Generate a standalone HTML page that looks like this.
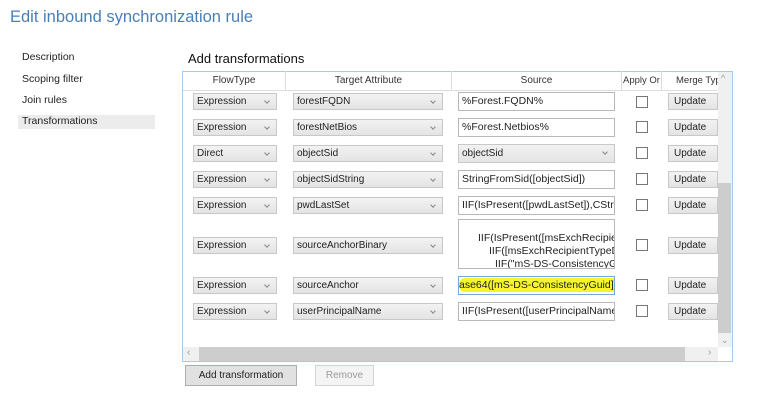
<!DOCTYPE html>
<html><head><style>
*{margin:0;padding:0;box-sizing:border-box}
body{width:768px;height:417px;background:#fff;font-family:"Segoe UI","Liberation Sans",sans-serif;position:relative;overflow:hidden;color:#222}
.a{position:absolute;white-space:nowrap}
.dd{position:absolute;height:17px;background:linear-gradient(#f2f2f2,#e4e4e4);border:1px solid #c8c8c8;font-size:10px;line-height:16px;padding-left:3px;color:#222;white-space:nowrap}
.dd:after{content:"";position:absolute;right:7px;top:5px;width:3px;height:3px;border-right:1px solid #888;border-bottom:1px solid #888;transform:rotate(45deg)}
.tb{position:absolute;height:19px;background:#fff;border:1px solid #b8b8b8;font-size:10.5px;line-height:17px;padding-left:3px;overflow:hidden;color:#222;white-space:nowrap}
.cb{position:absolute;width:12px;height:12px;border:1px solid #777;background:#fff}
.up{position:absolute;width:50px;height:17px;background:linear-gradient(#f2f2f2,#e4e4e4);border:1px solid #c8c8c8;font-size:10px;line-height:16px;padding-left:5px}
.h{position:absolute;top:71px;height:19px;font-size:10px;line-height:19px;text-align:center;border-right:1px solid #ddd;color:#333;white-space:nowrap;overflow:hidden}
</style></head><body>
<div class="a" style="left:10px;top:8px;font-size:16.5px;color:#4a7fb5">Edit inbound synchronization rule</div>
<div class="a" style="left:22px;top:51px;font-size:10.5px">Description</div>
<div class="a" style="left:22px;top:73px;font-size:10.5px">Scoping filter</div>
<div class="a" style="left:22px;top:94px;font-size:10.5px">Join rules</div>
<div class="a" style="left:18px;top:115px;width:137px;height:14px;background:#ececec"></div>
<div class="a" style="left:22px;top:115px;font-size:10.5px">Transformations</div>
<div class="a" style="left:188px;top:51px;font-size:13px;color:#111">Add transformations</div>
<div class="a" style="left:182px;top:71px;width:551px;height:291px;border:1px solid #a9c9e6;background:#fff"></div>
<div class="a" style="left:183px;top:90px;width:534px;height:1px;background:#ddd"></div>
<div class="h" style="left:183px;width:103px">FlowType</div>
<div class="h" style="left:286px;width:166px">Target Attribute</div>
<div class="h" style="left:452px;width:170px">Source</div>
<div class="h" style="left:622px;width:40px;font-size:9.5px">Apply Or</div>
<div class="h" style="left:662px;width:56px;border:none;text-align:left;padding-left:14px;font-size:9.5px">Merge Typ</div>
<div class="a" style="left:718px;top:72px;width:14px;height:275px;background:#f0f0f0"></div>
<div class="a" style="left:718px;top:183px;width:13px;height:150px;background:#cdcdcd"></div>
<div class="a" style="left:721px;top:73px;font-size:9px;color:#999">^</div>
<div class="a" style="left:721px;top:335px;font-size:9px;color:#999">&#8964;</div>
<div class="a" style="left:183px;top:347px;width:535px;height:14px;background:#f0f0f0"></div>
<div class="a" style="left:199px;top:347px;width:486px;height:14px;background:#cdcdcd"></div>
<div class="a" style="left:187px;top:347px;font-size:10px;color:#999">&lsaquo;</div>
<div class="a" style="left:708px;top:347px;font-size:10px;color:#999">&rsaquo;</div>

<div class="dd" style="left:193px;top:93px;width:84px">Expression</div>
<div class="dd" style="left:293px;top:93px;width:150px">forestFQDN</div>
<div class="tb" style="left:458px;top:92px;width:157px">%Forest.FQDN%</div>
<div class="cb" style="left:636px;top:96px"></div><div class="up" style="left:668px;top:93px">Update</div>

<div class="dd" style="left:193px;top:119px;width:84px">Expression</div>
<div class="dd" style="left:293px;top:119px;width:150px">forestNetBios</div>
<div class="tb" style="left:458px;top:118px;width:157px">%Forest.Netbios%</div>
<div class="cb" style="left:636px;top:121px"></div><div class="up" style="left:668px;top:119px">Update</div>

<div class="dd" style="left:193px;top:145px;width:84px">Direct</div>
<div class="dd" style="left:293px;top:145px;width:150px">objectSid</div>
<div class="dd" style="left:458px;top:144px;width:157px;height:19px;line-height:17px">objectSid</div>
<div class="cb" style="left:636px;top:147px"></div><div class="up" style="left:668px;top:145px">Update</div>

<div class="dd" style="left:193px;top:171px;width:84px">Expression</div>
<div class="dd" style="left:293px;top:171px;width:150px">objectSidString</div>
<div class="tb" style="left:458px;top:170px;width:157px">StringFromSid([objectSid])</div>
<div class="cb" style="left:636px;top:173px"></div><div class="up" style="left:668px;top:171px">Update</div>

<div class="dd" style="left:193px;top:197px;width:84px">Expression</div>
<div class="dd" style="left:293px;top:197px;width:150px">pwdLastSet</div>
<div class="tb" style="left:458px;top:196px;width:157px">IIF(IsPresent([pwdLastSet]),CStr(FormatD</div>
<div class="cb" style="left:636px;top:199px"></div><div class="up" style="left:668px;top:197px">Update</div>

<div class="dd" style="left:193px;top:237px;width:84px">Expression</div>
<div class="dd" style="left:293px;top:237px;width:150px">sourceAnchorBinary</div>
<div class="tb" style="left:458px;top:219px;width:157px;height:50px;line-height:13px;padding-top:12px;padding-left:0">
<div style="padding-left:19px">IIF(IsPresent([msExchRecipientTy</div>
<div style="padding-left:30px">IIF([msExchRecipientTypeDeta</div>
<div style="padding-left:36px">IIF("mS-DS-ConsistencyGu</div></div>
<div class="cb" style="left:636px;top:239px"></div><div class="up" style="left:668px;top:237px">Update</div>

<div class="dd" style="left:193px;top:277px;width:84px">Expression</div>
<div class="dd" style="left:293px;top:277px;width:150px">sourceAnchor</div>
<div class="tb" style="left:458px;top:276px;width:157px;border-color:#7aa7d6;padding-left:0"><span style="background:#f5f52e;border-radius:6px;padding:1px 0">ase64([mS-DS-ConsistencyGuid])))</span>)</div>
<div class="cb" style="left:636px;top:279px"></div><div class="up" style="left:668px;top:277px">Update</div>

<div class="dd" style="left:193px;top:303px;width:84px">Expression</div>
<div class="dd" style="left:293px;top:303px;width:150px">userPrincipalName</div>
<div class="tb" style="left:458px;top:302px;width:157px">IIF(IsPresent([userPrincipalName]),[u</div>
<div class="cb" style="left:636px;top:305px"></div><div class="up" style="left:668px;top:303px">Update</div>

<div class="a" style="left:185px;top:365px;width:112px;height:21px;background:#e1e1e1;border:1px solid #adadad;font-size:10px;line-height:19px;text-align:center">Add transformation</div>
<div class="a" style="left:315px;top:365px;width:59px;height:21px;background:#f4f4f4;border:1px solid #d4d4d4;font-size:10px;line-height:19px;text-align:center;color:#9a9a9a">Remove</div>
</body></html>
